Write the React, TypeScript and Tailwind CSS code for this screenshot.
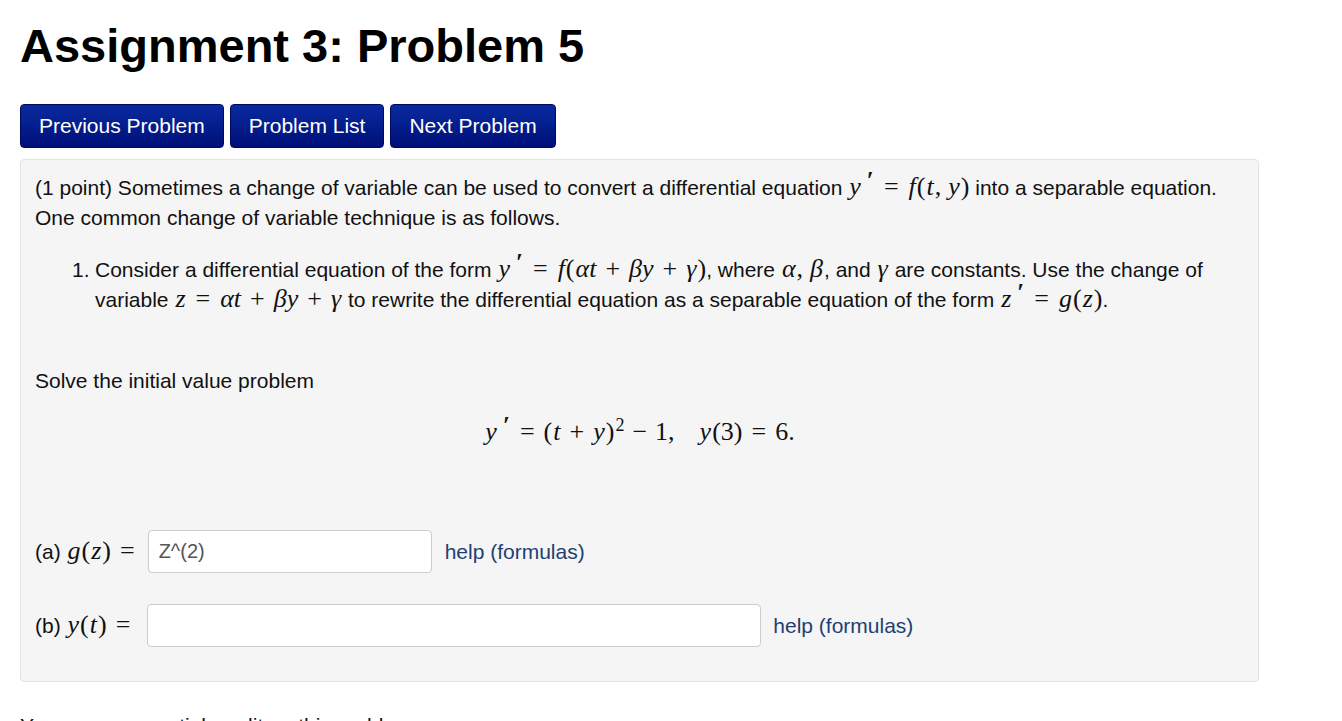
import React from 'react';

const sans = "font-['Liberation_Sans',Arial,sans-serif]";

function M({ children }: { children: React.ReactNode }) {
  return (
    <span className="font-['Liberation_Serif','Times_New_Roman',serif] text-[26px] whitespace-nowrap leading-none">
      {children}
    </span>
  );
}

function V({ children }: { children: React.ReactNode }) {
  return <span className="mx-[1px] italic">{children}</span>;
}

function Eq() {
  return <span className="mx-[9px]">=</span>;
}

function Plus({ children = '+' }: { children?: React.ReactNode }) {
  return <span className="mx-[8px]">{children}</span>;
}

function Prime() {
  return <span className="relative -top-[6px] ml-[5px] mr-[1px] text-[25px] font-bold">′</span>;
}

function Button({ label }: { label: string }) {
  return (
    <button className="h-[44px] rounded-[4px] border border-[#00095c] bg-gradient-to-b from-[#0b2aa0] to-[#000f78] px-[18px] text-[21px] text-white">
      {label}
    </button>
  );
}

export default function App() {
  return (
    <div className={`${sans} min-h-screen bg-white px-[20px] text-[#111]`}>
      <h1 className="pt-[18px] text-[47px] font-bold leading-[56px] text-black">Assignment 3: Problem 5</h1>

      <div className="mt-[30px] flex gap-[6px]">
        <Button label="Previous Problem" />
        <Button label="Problem List" />
        <Button label="Next Problem" />
      </div>

      <div className="mt-[11px] w-[1239px] rounded-[4px] border border-[#e3e3e3] bg-[#f5f5f5] px-[14px] pb-[34px] pt-[13px] text-[21px] leading-[30px]">
        <p>
          (1 point) Sometimes a change of variable can be used to convert a differential equation{' '}
          <M>
            <V>y</V>
            <Prime />
            <Eq />
            <V>f</V>(<V>t</V>,<span className="ml-[6px]" />
            <V>y</V>)
          </M>{' '}
          into a separable equation.
          <br />
          One common change of variable technique is as follows.
        </p>

        <div className="ml-[37px] mt-[22px] flex">
          <span className="w-[23px] shrink-0">1.</span>
          <p>
            Consider a differential equation of the form{' '}
            <M>
              <V>y</V>
              <Prime />
              <Eq />
              <V>f</V>(<V>αt</V>
              <Plus />
              <V>βy</V>
              <Plus />
              <V>γ</V>)
            </M>
            , where{' '}
            <M>
              <V>α</V>,<span className="ml-[6px]" />
              <V>β</V>
            </M>
            , and <M><V>γ</V></M> are constants. Use the change of
            <br />
            variable{' '}
            <M>
              <V>z</V>
              <Eq />
              <V>αt</V>
              <Plus />
              <V>βy</V>
              <Plus />
              <V>γ</V>
            </M>{' '}
            to rewrite the differential equation as a separable equation of the form{' '}
            <M>
              <V>z</V>
              <Prime />
              <Eq />
              <V>g</V>(<V>z</V>)
            </M>
            .
          </p>
        </div>

        <p className="mt-[51px]">Solve the initial value problem</p>

        <div className="mt-[22px] text-center">
          <M>
            <V>y</V>
            <Prime />
            <Eq />(<V>t</V>
            <Plus />
            <V>y</V>)<sup className="ml-[1px] text-[18px]">2</sup>
            <Plus>−</Plus>1,
            <span className="ml-[24px]" />
            <V>y</V>(3)
            <Eq />6.
          </M>
        </div>

        <div className="mt-[82px] flex items-center">
          <span>
            (a){' '}
            <M>
              <V>g</V>(<V>z</V>)<Eq />
            </M>
          </span>
          <input
            defaultValue="Z^(2)"
            className="ml-[4px] h-[43px] w-[284px] rounded-[4px] border border-[#cccccc] bg-white px-[10px] text-[20px] text-[#555] outline-none"
          />
          <a className="ml-[13px] text-[#1f3f73]">help (formulas)</a>
        </div>

        <div className="mt-[31px] flex items-center">
          <span>
            (b){' '}
            <M>
              <V>y</V>(<V>t</V>)<Eq />
            </M>
          </span>
          <input className="ml-[8px] h-[43px] w-[614px] rounded-[4px] border border-[#cccccc] bg-white px-[10px] text-[20px] text-[#555] outline-none" />
          <a className="ml-[12px] text-[#1f3f73]">help (formulas)</a>
        </div>
      </div>

      <p className="mt-[29px] text-[21px] leading-[30px]">You can earn partial credit on this problem.</p>
    </div>
  );
}
